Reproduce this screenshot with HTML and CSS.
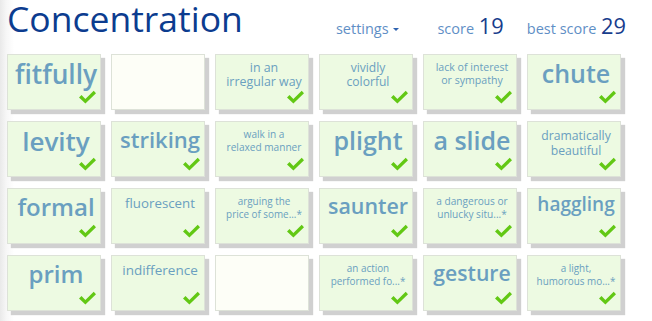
FILE: index.html
```html
<!DOCTYPE html>
<html>
<head>
<meta charset="utf-8">
<link rel="stylesheet" href="styles.css">
</head>
<body>
<div class="page">
  <header class="header">
    <h1 class="title">Concentration</h1>
    <div class="settings">settings <span class="caret"></span></div>
    <div class="stat">score <span class="num">19</span></div>
    <div class="stat best">best score <span class="num">29</span></div>
  </header>
  <div class="grid">
    <div class="card"><div class="txt big f275">fitfully</div><svg class="check" viewBox="0 0 17 14"><path d="M0 7.6 L2.5 5.1 L6.4 8.9 L14.7 0.7 L17 3.2 L6.4 13.6 Z"/></svg></div>
    <div class="card blank"></div>
    <div class="card"><div class="txt s126">in an<br>irregular way</div><svg class="check" viewBox="0 0 17 14"><path d="M0 7.6 L2.5 5.1 L6.4 8.9 L14.7 0.7 L17 3.2 L6.4 13.6 Z"/></svg></div>
    <div class="card"><div class="txt s123">vividly<br>colorful</div><svg class="check" viewBox="0 0 17 14"><path d="M0 7.6 L2.5 5.1 L6.4 8.9 L14.7 0.7 L17 3.2 L6.4 13.6 Z"/></svg></div>
    <div class="card"><div class="txt s107">lack of interest<br>or sympathy</div><svg class="check" viewBox="0 0 17 14"><path d="M0 7.6 L2.5 5.1 L6.4 8.9 L14.7 0.7 L17 3.2 L6.4 13.6 Z"/></svg></div>
    <div class="card"><div class="txt big f26">chute</div><svg class="check" viewBox="0 0 17 14"><path d="M0 7.6 L2.5 5.1 L6.4 8.9 L14.7 0.7 L17 3.2 L6.4 13.6 Z"/></svg></div>

    <div class="card"><div class="txt big f27">levity</div><svg class="check" viewBox="0 0 17 14"><path d="M0 7.6 L2.5 5.1 L6.4 8.9 L14.7 0.7 L17 3.2 L6.4 13.6 Z"/></svg></div>
    <div class="card"><div class="txt big f23">striking</div><svg class="check" viewBox="0 0 17 14"><path d="M0 7.6 L2.5 5.1 L6.4 8.9 L14.7 0.7 L17 3.2 L6.4 13.6 Z"/></svg></div>
    <div class="card"><div class="txt s102">walk in a<br>relaxed manner</div><svg class="check" viewBox="0 0 17 14"><path d="M0 7.6 L2.5 5.1 L6.4 8.9 L14.7 0.7 L17 3.2 L6.4 13.6 Z"/></svg></div>
    <div class="card"><div class="txt big f26">plight</div><svg class="check" viewBox="0 0 17 14"><path d="M0 7.6 L2.5 5.1 L6.4 8.9 L14.7 0.7 L17 3.2 L6.4 13.6 Z"/></svg></div>
    <div class="card"><div class="txt big f26">a slide</div><svg class="check" viewBox="0 0 17 14"><path d="M0 7.6 L2.5 5.1 L6.4 8.9 L14.7 0.7 L17 3.2 L6.4 13.6 Z"/></svg></div>
    <div class="card"><div class="txt s124">dramatically<br>beautiful</div><svg class="check" viewBox="0 0 17 14"><path d="M0 7.6 L2.5 5.1 L6.4 8.9 L14.7 0.7 L17 3.2 L6.4 13.6 Z"/></svg></div>

    <div class="card"><div class="txt big f25">formal</div><svg class="check" viewBox="0 0 17 14"><path d="M0 7.6 L2.5 5.1 L6.4 8.9 L14.7 0.7 L17 3.2 L6.4 13.6 Z"/></svg></div>
    <div class="card"><div class="txt s135">fluorescent</div><svg class="check" viewBox="0 0 17 14"><path d="M0 7.6 L2.5 5.1 L6.4 8.9 L14.7 0.7 L17 3.2 L6.4 13.6 Z"/></svg></div>
    <div class="card"><div class="txt s100">arguing the<br>price of some...*</div><svg class="check" viewBox="0 0 17 14"><path d="M0 7.6 L2.5 5.1 L6.4 8.9 L14.7 0.7 L17 3.2 L6.4 13.6 Z"/></svg></div>
    <div class="card"><div class="txt big f225">saunter</div><svg class="check" viewBox="0 0 17 14"><path d="M0 7.6 L2.5 5.1 L6.4 8.9 L14.7 0.7 L17 3.2 L6.4 13.6 Z"/></svg></div>
    <div class="card"><div class="txt s102">a dangerous or<br>unlucky situ...*</div><svg class="check" viewBox="0 0 17 14"><path d="M0 7.6 L2.5 5.1 L6.4 8.9 L14.7 0.7 L17 3.2 L6.4 13.6 Z"/></svg></div>
    <div class="card"><div class="txt big f20">haggling</div><svg class="check" viewBox="0 0 17 14"><path d="M0 7.6 L2.5 5.1 L6.4 8.9 L14.7 0.7 L17 3.2 L6.4 13.6 Z"/></svg></div>

    <div class="card"><div class="txt big f25">prim</div><svg class="check" viewBox="0 0 17 14"><path d="M0 7.6 L2.5 5.1 L6.4 8.9 L14.7 0.7 L17 3.2 L6.4 13.6 Z"/></svg></div>
    <div class="card"><div class="txt s137">indifference</div><svg class="check" viewBox="0 0 17 14"><path d="M0 7.6 L2.5 5.1 L6.4 8.9 L14.7 0.7 L17 3.2 L6.4 13.6 Z"/></svg></div>
    <div class="card blank"></div>
    <div class="card"><div class="txt s100">an action<br>performed fo...*</div><svg class="check" viewBox="0 0 17 14"><path d="M0 7.6 L2.5 5.1 L6.4 8.9 L14.7 0.7 L17 3.2 L6.4 13.6 Z"/></svg></div>
    <div class="card"><div class="txt big f22">gesture</div><svg class="check" viewBox="0 0 17 14"><path d="M0 7.6 L2.5 5.1 L6.4 8.9 L14.7 0.7 L17 3.2 L6.4 13.6 Z"/></svg></div>
    <div class="card"><div class="txt s100">a light,<br>humorous mo...*</div><svg class="check" viewBox="0 0 17 14"><path d="M0 7.6 L2.5 5.1 L6.4 8.9 L14.7 0.7 L17 3.2 L6.4 13.6 Z"/></svg></div>
  </div>
</div>
</body>
</html>
```

FILE: styles.css
```css
html, body {
  margin: 0;
  padding: 0;
}
body {
  width: 652px;
  height: 321px;
  overflow: hidden;
  background: linear-gradient(90deg, #e9e9e9 0px, #f6f6f6 6px, #ffffff 14px);
  font-family: "Open Sans", "Liberation Sans", sans-serif;
}
.page {
  padding-left: 7px;
}
.header {
  display: flex;
  align-items: baseline;
  height: 40px;
  margin-bottom: 14px;
  padding-right: 26px;
}
.title {
  margin: 0;
  font-size: 35.5px;
  line-height: 40px;
  font-weight: 400;
  color: #0c3c8f;
  flex: 1;
  position: relative;
  top: -2px;
}
.settings {
  font-size: 14.5px;
  color: #5f8fc6;
  margin-right: 38px;
}
.caret {
  display: inline-block;
  width: 0;
  height: 0;
  border-left: 3px solid transparent;
  border-right: 3px solid transparent;
  border-top: 3.5px solid #2f63b0;
  vertical-align: 3px;
  margin-left: 1px;
}
.stat {
  font-size: 14.5px;
  color: #5f8fc6;
}
.stat.best {
  margin-left: 23px;
}
.num {
  font-size: 21.8px;
  color: #173c8c;
  margin-left: 1px;
}
.grid {
  display: grid;
  grid-template-columns: repeat(6, 94px);
  grid-auto-rows: 56px;
  column-gap: 10px;
  row-gap: 11px;
}
.card {
  position: relative;
  box-sizing: border-box;
  background: #edfae2;
  border: 1px solid #dde2d8;
  box-shadow: 4px 4px 1px #d0d0d0;
  padding: 6px 1px 0 5px;
  text-align: center;
  color: #6a9fc0;
}
.card.blank {
  background: #fdfef7;
}
.txt {
  line-height: 1.3;
  font-weight: 500;
}
.txt.big {
  line-height: 1;
  font-weight: 600;
  margin-top: 0;
}
.f275 { font-size: 26.3px; }
.f27 { font-size: 26px; }
.f26 { font-size: 25px; }
.f25 { font-size: 24px; }
.f23 { font-size: 22px; }
.f225 { font-size: 21.4px; }
.f22 { font-size: 21.2px; }
.f20 { font-size: 19px; }
.s137 { font-size: 13.5px; }
.s135 { font-size: 13.3px; }
.s126 { font-size: 12.4px; line-height: 14px; }
.s124 { font-size: 12.2px; line-height: 15px; }
.s123 { font-size: 12.1px; line-height: 14px; }
.s107 { font-size: 10.6px; line-height: 13px; }
.s102 { font-size: 10.1px; line-height: 12.5px; }
.s100 { font-size: 9.9px; line-height: 12.5px; }
.check {
  position: absolute;
  right: 4px;
  bottom: 5px;
  width: 17px;
  height: 14px;
  fill: #62c814;
}
```
